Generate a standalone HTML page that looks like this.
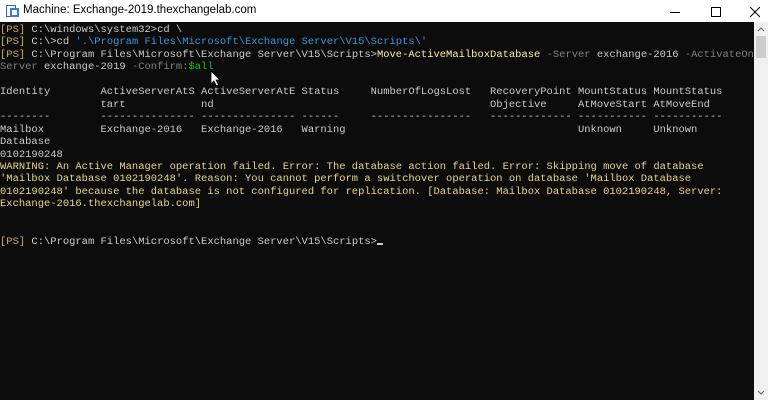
<!DOCTYPE html>
<html><head><meta charset="utf-8"><style>
html,body{margin:0;padding:0;width:768px;height:400px;overflow:hidden;background:#fff;font-family:"Liberation Sans",sans-serif}
#title{position:absolute;left:0;top:0;width:768px;height:22px;background:#fff}
#title .t{position:absolute;left:23px;top:4px;font-size:11.5px;color:#000}
#term{position:absolute;left:0;top:22px;width:754px;height:378px;background:#0c0c0c}
#sb{position:absolute;left:754px;top:22px;width:14px;height:378px;background:#f0f0f0}
pre{position:absolute;left:0;top:24px;margin:0;font-family:"Liberation Mono",monospace;font-size:10.48px;line-height:12.45px;color:#cccccc;white-space:pre}
.y{color:#c8b060}.b{color:#3a96dd}.c{color:#f9f1a5}.g{color:#808080}.gr{color:#16c60c}.w{color:#e8d68c}
</style></head><body>
<div id="title">
<svg style="position:absolute;left:6px;top:4px" width="14" height="14" viewBox="0 0 14 14"><rect x="0.5" y="1.5" width="9" height="11" fill="#fff" stroke="#2b6cb0"/><rect x="4" y="4" width="9" height="9" fill="#3a7bd5"/><rect x="6" y="6" width="5" height="5" fill="#fff"/></svg>
<span class="t">Machine: Exchange-2019.thexchangelab.com</span>
<svg style="position:absolute;left:670px;top:6px" width="90" height="12" viewBox="0 0 90 12"><line x1="0" y1="6.5" x2="10" y2="6.5" stroke="#000"/><rect x="41.5" y="1.5" width="9" height="9" fill="none" stroke="#000"/><path d="M80 1 L90 11 M90 1 L80 11" stroke="#000"/></svg>
</div>
<div id="term"></div>
<div id="sb"><div style="position:absolute;left:2px;top:14px;width:10px;height:22px;background:#cdcdcd"></div>
<svg style="position:absolute;left:3px;top:5px" width="8" height="5"><path d="M1 4 L4 1 L7 4" stroke="#606060" fill="none"/></svg>
<svg style="position:absolute;left:3px;top:368px" width="8" height="5"><path d="M1 1 L4 4 L7 1" stroke="#606060" fill="none"/></svg></div>
<pre><span class="y">[PS]</span> C:\windows\system32&gt;cd \
<span class="y">[PS]</span> C:\&gt;cd <span class="b">'.\Program Files\Microsoft\Exchange Server\V15\Scripts\'</span>
<span class="y">[PS]</span> C:\Program Files\Microsoft\Exchange Server\V15\Scripts&gt;<span class="c">Move-ActiveMailboxDatabase</span> <span class="g">-Server</span> exchange-2016 <span class="g">-ActivateOn</span>
<span class="g">Server</span> exchange-2019 <span class="g">-Confirm:</span><span class="gr">$all</span>

Identity        ActiveServerAtS ActiveServerAtE Status     NumberOfLogsLost   RecoveryPoint MountStatus MountStatus
                tart            nd                                            Objective     AtMoveStart AtMoveEnd
--------        --------------- --------------- ------     ----------------   ------------- ----------- -----------
Mailbox         Exchange-2016   Exchange-2016   Warning                                     Unknown     Unknown
Database
0102190248
<span class="w">WARNING: An Active Manager operation failed. Error: The database action failed. Error: Skipping move of database
'Mailbox Database 0102190248'. Reason: You cannot perform a switchover operation on database 'Mailbox Database
0102190248' because the database is not configured for replication. [Database: Mailbox Database 0102190248, Server:
Exchange-2016.thexchangelab.com]</span>


<span class="y">[PS]</span> C:\Program Files\Microsoft\Exchange Server\V15\Scripts&gt;<span style="display:inline-block;width:6px;height:2px;background:#ccc;vertical-align:-1px"></span></pre>
<svg style="position:absolute;left:210px;top:70px" width="12" height="18" viewBox="0 0 12 18"><path d="M1 1 L1 14 L4 11 L6.5 16 L8.5 15 L6 10 L10 10 Z" fill="#fff" stroke="#000" stroke-width="0.8"/></svg>
</body></html>
